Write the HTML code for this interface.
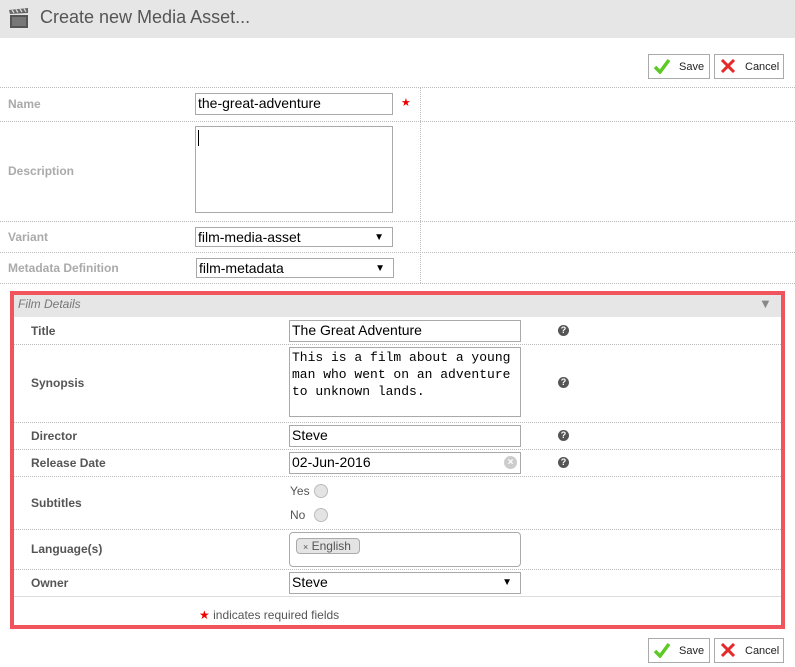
<!DOCTYPE html>
<html><head><meta charset="utf-8"><style>
*{box-sizing:border-box;margin:0;padding:0}
body{width:795px;height:667px;background:#fff;font-family:"Liberation Sans",Arial,sans-serif;position:relative;overflow:hidden}
.a{position:absolute}
.hd{left:0;top:0;width:795px;height:38px;background:#e6e6e6}
.title{left:40px;top:7px;font-size:18px;color:#555}
.btn{position:absolute;height:25px;border:1px solid #aaa;background:#fff;font-size:11px;color:#222;padding-left:30px;line-height:25px}
.hl{position:absolute;height:0;border-top:1px dotted #bbb}
.vl{position:absolute;width:0;border-left:1px dotted #bbb}
.lb{position:absolute;font-size:12px;font-weight:bold;color:#aaa}
.lb2{position:absolute;font-size:12px;font-weight:bold;color:#555}
.in{position:absolute;border:1px solid #a9a9a9;background:#fff;font-size:14px;color:#000;padding-left:2px;line-height:19px}
.sel:after{content:"▼";position:absolute;right:8px;top:0;font-size:10px}
.q{position:absolute;width:11px;height:11px;border-radius:50%;background:#555;color:#fff;font-size:9px;font-weight:bold;text-align:center;line-height:11px}
.rad{position:absolute;width:14px;height:14px;border-radius:50%;border:1px solid #bbb;background:#e4e4e4}
.star{color:#e00}
</style></head><body>
<div class="a hd"></div>
<svg class="a" style="left:8px;top:7px" width="22" height="22" viewBox="0 0 22 22"><rect x="2" y="8" width="18" height="13" fill="#555"/><rect x="4" y="10" width="14" height="9" fill="#777"/><path d="M1 3 L20 1 L20 6 L2 7 Z" fill="#666"/><path d="M4 3l2 3M8 2.5l2 3M12 2l2 3M16 1.7l2 3" stroke="#ddd" stroke-width="1.3"/></svg>
<div class="a title">Create new Media Asset...</div>

<div class="btn" style="left:648px;top:54px;width:62px">Save</div>
<svg class="a" style="left:653px;top:58px" width="18" height="16"><path d="M2 9 L7 14 L16 2" stroke="#5cc924" stroke-width="3.5" fill="none"/></svg>
<div class="btn" style="left:714px;top:54px;width:70px">Cancel</div>
<svg class="a" style="left:720px;top:59px" width="16" height="14"><path d="M2 1 L14 13 M14 1 L2 13" stroke="#e42a2a" stroke-width="3"/></svg>

<div class="hl" style="left:0;top:87px;width:795px"></div>
<div class="hl" style="left:0;top:121px;width:795px"></div>
<div class="hl" style="left:0;top:221px;width:795px"></div>
<div class="hl" style="left:0;top:252px;width:795px"></div>
<div class="hl" style="left:0;top:283px;width:795px"></div>
<div class="vl" style="left:420px;top:87px;height:196px"></div>

<div class="lb" style="left:8px;top:97px">Name</div>
<div class="in" style="left:195px;top:93px;width:198px;height:22px">the-great-adventure</div>
<div class="a star" style="left:401px;top:96px;font-size:11px">★</div>
<div class="lb" style="left:8px;top:164px">Description</div>
<div class="in" style="left:195px;top:126px;width:198px;height:87px"><span style="display:inline-block;width:1px;height:16px;background:#000;margin-top:3px"></span></div>
<div class="lb" style="left:8px;top:230px">Variant</div>
<div class="in sel" style="left:195px;top:227px;width:198px;height:20px">film-media-asset</div>
<div class="lb" style="left:8px;top:261px">Metadata Definition</div>
<div class="in sel" style="left:196px;top:258px;width:198px;height:20px">film-metadata</div>

<div class="a" style="left:10px;top:291px;width:775px;height:338px;border:4px solid #f0545c"></div>
<div class="a" style="left:14px;top:295px;width:767px;height:22px;background:#e6e6e6"></div>
<div class="a" style="left:18px;top:297px;font-size:12px;font-style:italic;color:#777">Film Details</div>
<div class="a" style="left:759px;top:296px;font-size:13px;color:#888">▼</div>

<div class="hl" style="left:14px;top:344px;width:767px"></div>
<div class="hl" style="left:14px;top:422px;width:767px"></div>
<div class="hl" style="left:14px;top:449px;width:767px"></div>
<div class="hl" style="left:14px;top:476px;width:767px"></div>
<div class="hl" style="left:14px;top:529px;width:767px"></div>
<div class="hl" style="left:14px;top:569px;width:767px"></div>
<div class="hl" style="left:14px;top:596px;width:767px;border-top:1px solid #ddd"></div>

<div class="lb2" style="left:31px;top:324px">Title</div>
<div class="in" style="left:289px;top:320px;width:232px;height:22px">The Great Adventure</div>
<div class="q" style="left:558px;top:325px">?</div>
<div class="lb2" style="left:31px;top:376px">Synopsis</div>
<div class="in" style="left:289px;top:347px;width:232px;height:70px;font-family:'Liberation Mono',monospace;font-size:13px;line-height:17px;padding:1px 2px">This is a film about a young man who went on an adventure to unknown lands.</div>
<div class="q" style="left:558px;top:377px">?</div>
<div class="lb2" style="left:31px;top:429px">Director</div>
<div class="in" style="left:289px;top:425px;width:232px;height:22px">Steve</div>
<div class="q" style="left:558px;top:430px">?</div>
<div class="lb2" style="left:31px;top:456px">Release Date</div>
<div class="in" style="left:289px;top:452px;width:232px;height:22px">02-Jun-2016</div>
<div class="a" style="left:504px;top:456px;width:13px;height:13px;border-radius:50%;background:#ccc;color:#fff;font-size:10px;text-align:center;line-height:13px;font-weight:bold">×</div>
<div class="q" style="left:558px;top:457px">?</div>
<div class="lb2" style="left:31px;top:496px">Subtitles</div>
<div class="a" style="left:290px;top:484px;font-size:12px;color:#555">Yes</div>
<div class="rad" style="left:314px;top:484px"></div>
<div class="a" style="left:290px;top:508px;font-size:12px;color:#555">No</div>
<div class="rad" style="left:314px;top:508px"></div>
<div class="lb2" style="left:31px;top:542px">Language(s)</div>
<div class="a" style="left:289px;top:532px;width:232px;height:35px;border:1px solid #aaa;border-radius:4px"></div>
<div class="a" style="left:296px;top:538px;width:64px;height:16px;border:1px solid #aaa;border-radius:4px;background:#e4e4e4;font-size:12px;color:#555;line-height:14px;padding-left:6px"><span style="font-size:9px">×</span> English</div>
<div class="lb2" style="left:31px;top:576px">Owner</div>
<div class="in sel" style="left:289px;top:572px;width:232px;height:22px">Steve</div>

<div class="a" style="left:199px;top:608px;font-size:12px;color:#555"><span class="star">★</span> indicates required fields</div>

<div class="btn" style="left:648px;top:638px;width:62px">Save</div>
<svg class="a" style="left:653px;top:642px" width="18" height="16"><path d="M2 9 L7 14 L16 2" stroke="#5cc924" stroke-width="3.5" fill="none"/></svg>
<div class="btn" style="left:714px;top:638px;width:70px">Cancel</div>
<svg class="a" style="left:720px;top:643px" width="16" height="14"><path d="M2 1 L14 13 M14 1 L2 13" stroke="#e42a2a" stroke-width="3"/></svg>
</body></html>
